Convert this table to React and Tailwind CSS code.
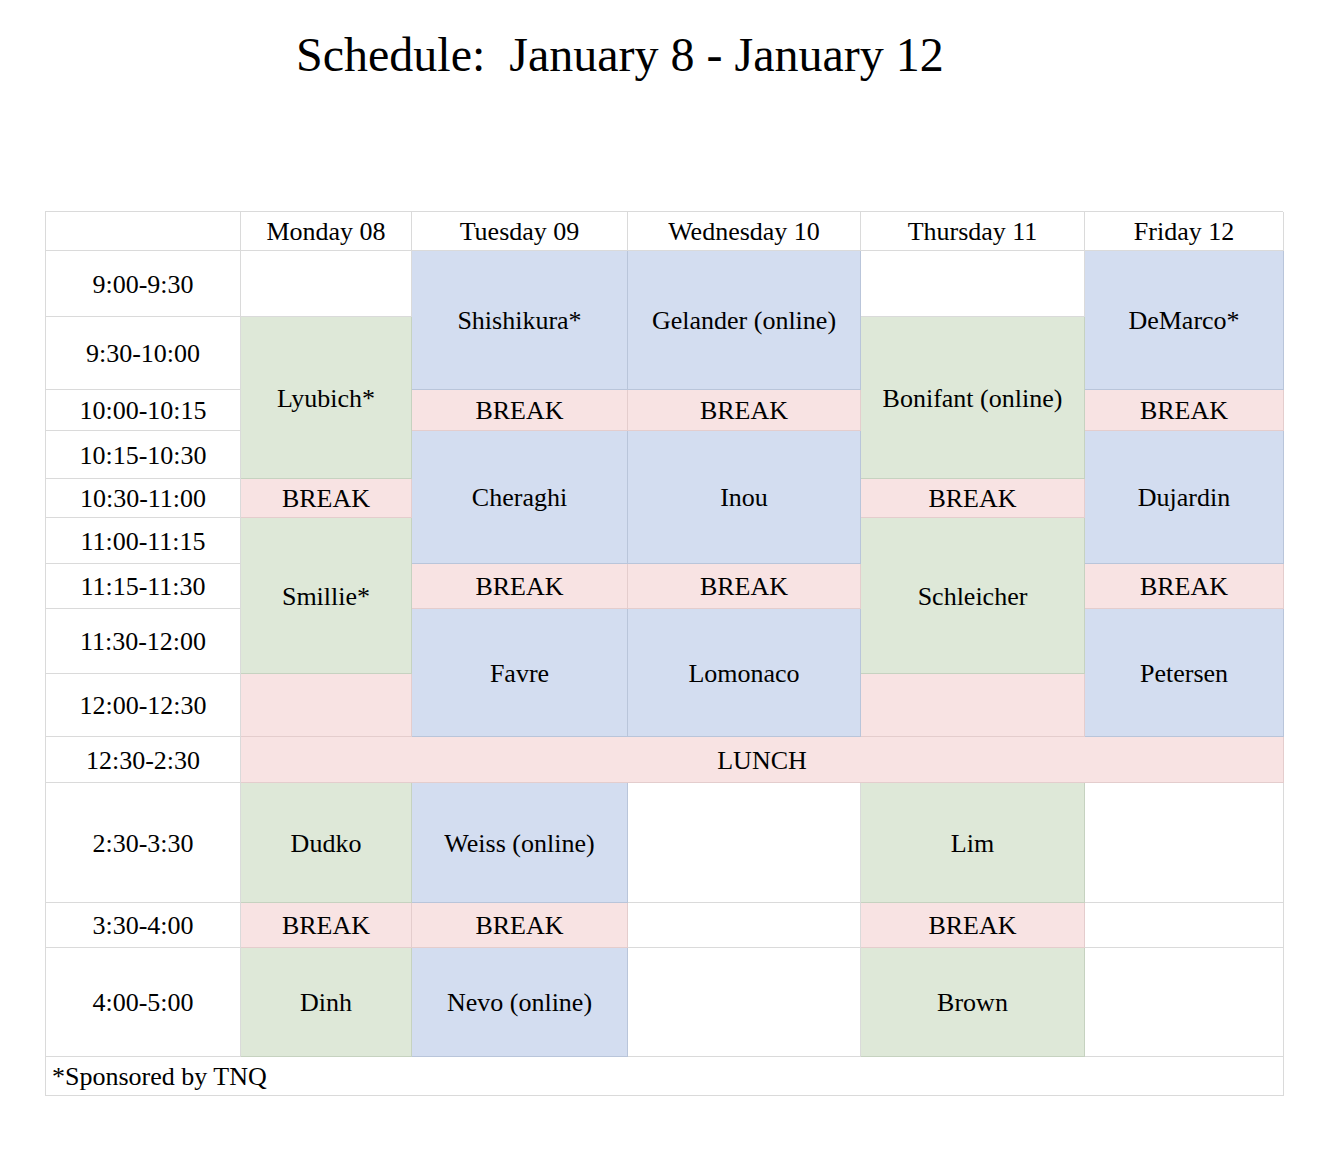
import React from "react";

const W = "bg-white border-[#dadada]";
const B = "bg-[#d3ddf0] border-[#b9c5da]";
const G = "bg-[#dee8d8] border-[#c6d2c0]";
const P = "bg-[#f8e3e3] border-[#e4cdcd]";

function Cell({ c, r, cs = 1, rs = 1, kind = W, children, extra = "" }) {
  return (
    <div
      className={`border-r border-b flex items-center justify-center pt-[2px] ${kind} ${extra}`}
      style={{ gridColumn: `${c} / span ${cs}`, gridRow: `${r} / span ${rs}` }}
    >
      {children}
    </div>
  );
}

const times = [
  "9:00-9:30",
  "9:30-10:00",
  "10:00-10:15",
  "10:15-10:30",
  "10:30-11:00",
  "11:00-11:15",
  "11:15-11:30",
  "11:30-12:00",
  "12:00-12:30",
  "12:30-2:30",
  "2:30-3:30",
  "3:30-4:00",
  "4:00-5:00",
];

const days = ["Monday 08", "Tuesday 09", "Wednesday 10", "Thursday 11", "Friday 12"];

export default function App() {
  return (
    <div
      className="w-[1341px] h-[1163px] bg-white text-black"
      style={{ fontFamily: '"Liberation Serif", "Times New Roman", serif' }}
    >
      <div className="pt-[31px] pl-[296px] h-[211px]">
        <h1 className="text-[48px] leading-[48px] whitespace-pre font-normal">
          Schedule:  January 8 - January 12
        </h1>
      </div>
      <div className="pl-[45px]">
        <div className="grid w-[1238px] border-t border-l border-[#dadada] text-[26px] leading-none grid-cols-[195px_171px_216px_233px_224px_199px] grid-rows-[39px_66px_73px_41px_48px_39px_46px_45px_65px_63px_46px_120px_45px_109px_39px]">
          <Cell c={1} r={1} />
          {days.map((d, i) => (
            <Cell key={d} c={i + 2} r={1}>
              {d}
            </Cell>
          ))}
          {times.map((t, i) => (
            <Cell key={t} c={1} r={i + 2}>
              {t}
            </Cell>
          ))}

          {/* Monday */}
          <Cell c={2} r={2} />
          <Cell c={2} r={3} rs={3} kind={G}>Lyubich*</Cell>
          <Cell c={2} r={6} kind={P}>BREAK</Cell>
          <Cell c={2} r={7} rs={3} kind={G}>Smillie*</Cell>
          <Cell c={2} r={10} kind={P} />
          <Cell c={2} r={11} cs={5} kind={P}>LUNCH</Cell>
          <Cell c={2} r={12} kind={G}>Dudko</Cell>
          <Cell c={2} r={13} kind={P}>BREAK</Cell>
          <Cell c={2} r={14} kind={G}>Dinh</Cell>

          {/* Tuesday */}
          <Cell c={3} r={2} rs={2} kind={B}>Shishikura*</Cell>
          <Cell c={3} r={4} kind={P}>BREAK</Cell>
          <Cell c={3} r={5} rs={3} kind={B}>Cheraghi</Cell>
          <Cell c={3} r={8} kind={P}>BREAK</Cell>
          <Cell c={3} r={9} rs={2} kind={B}>Favre</Cell>
          <Cell c={3} r={12} kind={B}>Weiss (online)</Cell>
          <Cell c={3} r={13} kind={P}>BREAK</Cell>
          <Cell c={3} r={14} kind={B}>Nevo (online)</Cell>

          {/* Wednesday */}
          <Cell c={4} r={2} rs={2} kind={B}>Gelander (online)</Cell>
          <Cell c={4} r={4} kind={P}>BREAK</Cell>
          <Cell c={4} r={5} rs={3} kind={B}>Inou</Cell>
          <Cell c={4} r={8} kind={P}>BREAK</Cell>
          <Cell c={4} r={9} rs={2} kind={B}>Lomonaco</Cell>
          <Cell c={4} r={12} />
          <Cell c={4} r={13} />
          <Cell c={4} r={14} />

          {/* Thursday */}
          <Cell c={5} r={2} />
          <Cell c={5} r={3} rs={3} kind={G}>Bonifant (online)</Cell>
          <Cell c={5} r={6} kind={P}>BREAK</Cell>
          <Cell c={5} r={7} rs={3} kind={G}>Schleicher</Cell>
          <Cell c={5} r={10} kind={P} />
          <Cell c={5} r={12} kind={G}>Lim</Cell>
          <Cell c={5} r={13} kind={P}>BREAK</Cell>
          <Cell c={5} r={14} kind={G}>Brown</Cell>

          {/* Friday */}
          <Cell c={6} r={2} rs={2} kind={B}>DeMarco*</Cell>
          <Cell c={6} r={4} kind={P}>BREAK</Cell>
          <Cell c={6} r={5} rs={3} kind={B}>Dujardin</Cell>
          <Cell c={6} r={8} kind={P}>BREAK</Cell>
          <Cell c={6} r={9} rs={2} kind={B}>Petersen</Cell>
          <Cell c={6} r={12} />
          <Cell c={6} r={13} />
          <Cell c={6} r={14} />

          <Cell c={1} r={15} cs={6} extra="!justify-start pl-[6px]">
            *Sponsored by TNQ
          </Cell>
        </div>
      </div>
    </div>
  );
}
